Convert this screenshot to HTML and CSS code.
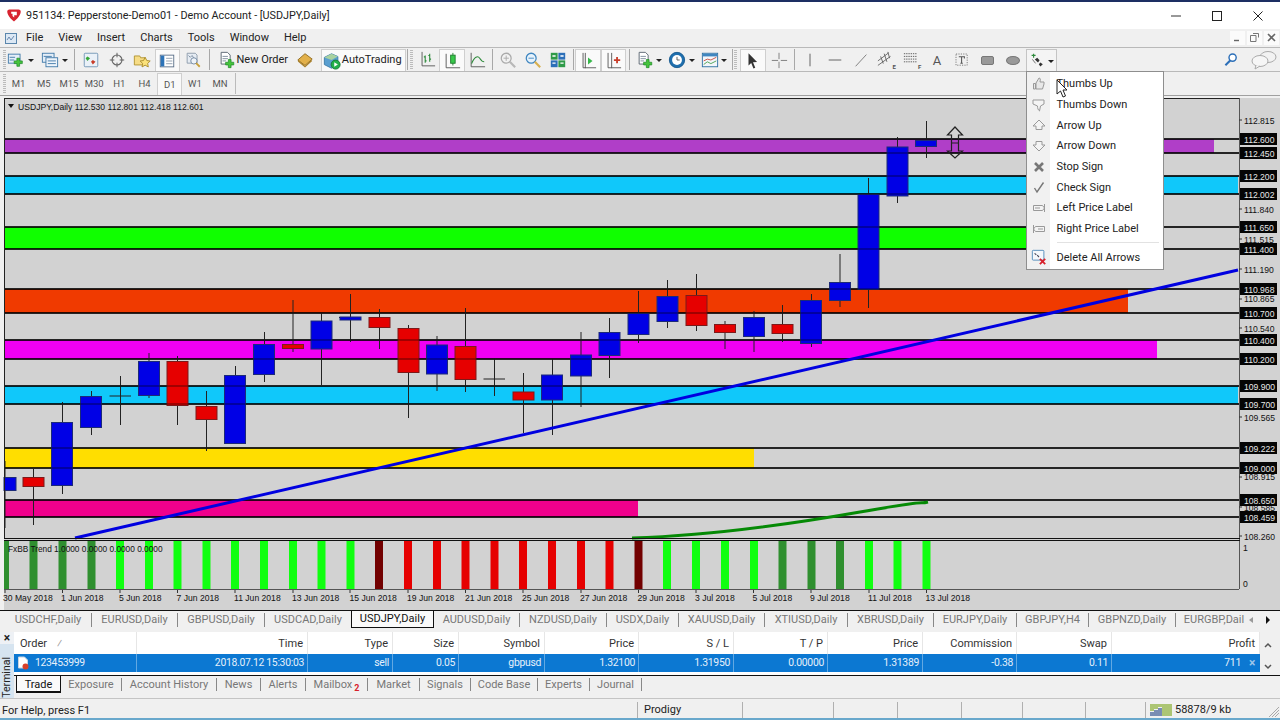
FILE: index.html
```html
<!DOCTYPE html>
<html lang="en">
<head>
  <meta charset="UTF-8">
  <title>951134: Pepperstone-Demo01 - Demo Account - [USDJPY,Daily]</title>
  <link rel="stylesheet" href="styles.css">
</head>
<body>
  <!-- shared toolbar icons -->
  <svg class="icon-defs" width="0" height="0">
    <symbol id="i-newchart" viewBox="0 0 20 20"><rect x="1.500" y="3.500" width="13" height="10" fill="#e4eef8" stroke="#3f78a8"/><path d="M3 7h6M3 10h5" stroke="#3f78a8"/><path d="M11 8h3v3h3v3h-3v3h-3v-3H8v-3h3z" fill="#46c43c" stroke="#1f8a2a" stroke-width=".8"/></symbol>
    <symbol id="i-profile" viewBox="0 0 20 20"><rect x="1.500" y="2.500" width="13" height="10" fill="#e4eef8" stroke="#3f78a8"/><rect x="5.500" y="7.500" width="13" height="10" fill="#eef4fa" stroke="#3f78a8"/><path d="M3 6h9M7.500 11h9M7.500 14h9" stroke="#3f78a8"/></symbol>
    <symbol id="i-market" viewBox="0 0 20 20"><rect x="2.500" y="2.500" width="15" height="15" rx="1" fill="#eaf1f8" stroke="#6f94b4"/><path d="M6 6l3 2-3 3-2-3z" fill="#37a83a"/><path d="M12 10l3 2-3 3-2-3z" fill="#c83c28"/></symbol>
    <symbol id="i-target" viewBox="0 0 20 20"><circle cx="10" cy="10" r="5.500" fill="none" stroke="#666" stroke-width="1.200"/><path d="M10 2v5M10 13v5M2 10h5M13 10h5" stroke="#555"/></symbol>
    <symbol id="i-star" viewBox="0 0 20 20"><path d="M1.500 5.500h6l1 2h5v8h-12z" fill="#f6dc86" stroke="#b0922e"/><path d="M13.500 7l1.800 3.600 3.800.5-2.800 2.700.7 3.900-3.500-1.900-3.500 1.900.7-3.900-2.800-2.700 3.800-.5z" fill="#fbe27a" stroke="#a88a2a"/></symbol>
    <symbol id="i-terminal" viewBox="0 0 20 20"><rect x="2.500" y="3.500" width="15" height="13" fill="#fff" stroke="#5a6f88"/><rect x="3" y="4" width="4" height="12" fill="#2c73b8"/><path d="M9 7h7M9 10h7M9 13h7" stroke="#8a9aaa"/></symbol>
    <symbol id="i-tester" viewBox="0 0 20 20"><path d="M3.500 2.500h9l2 2v9h-11z" fill="#e6ecf3" stroke="#8a98a8"/><path d="M5 5l2 2 2-2 2 3" fill="none" stroke="#7a8ca0"/><circle cx="11" cy="11" r="3.500" fill="#eef3f8" stroke="#6f86a0"/><path d="M13.500 13.500l4 4" stroke="#c8a03a" stroke-width="2"/></symbol>
    <symbol id="i-order" viewBox="0 0 20 20"><path d="M3.500 1.500h7l3 3v10h-10z" fill="#fff" stroke="#55606c"/><path d="M5 6h6M5 8.500h6M5 11h4" stroke="#7a8a9a"/><path d="M11.500 9.500h3v3h3v3h-3v3h-3v-3h-3v-3h3z" fill="#46c43c" stroke="#1f8a2a" stroke-width=".8"/></symbol>
    <symbol id="i-book" viewBox="0 0 20 20"><path d="M10 3l8 6-8 7-8-6z" fill="#e2b04a" stroke="#8e6a1e"/><path d="M2.500 11l7.500 6.500 7.500-7" fill="none" stroke="#a97f28" stroke-width="1.400"/></symbol>
    <symbol id="i-auto" viewBox="0 0 20 20"><path d="M1.500 6l8-4 7 3v9l-7 4-8-4z" fill="#5a9fd0" stroke="#3a7aa8"/><path d="M1.500 6l8 3 7-4-7-3z" fill="#a8d2a0"/><circle cx="14" cy="14" r="5" fill="#22b04a" stroke="#147a30"/><path d="M12.500 11.500l4 2.500-4 2.500z" fill="#fff"/></symbol>
    <symbol id="i-bars" viewBox="0 0 20 20"><path d="M4.500 1v15.500H19" fill="none" stroke="#555"/><path d="M8 5v8M6.500 6.500H8M8 11h1.500M13 3v9M11.500 5H13M13 9h1.500" fill="none" stroke="#2c8a3a" stroke-width="1.200"/></symbol>
    <symbol id="i-candle" viewBox="0 0 20 20"><path d="M3.500 2v15.500H19" fill="none" stroke="#555"/><path d="M11 1v14" stroke="#1f7a2c"/><rect x="8.500" y="3.500" width="5" height="9" fill="#37c84a" stroke="#1f7a2c"/></symbol>
    <symbol id="i-line" viewBox="0 0 20 20"><path d="M3.500 2v15.500H19" fill="none" stroke="#555"/><path d="M4 14c3-8 7-9 9-6s3 4 5 4" fill="none" stroke="#2c8a3a" stroke-width="1.200"/></symbol>
    <symbol id="i-zoomin" viewBox="0 0 20 20"><circle cx="8" cy="8" r="5.500" fill="#f2f2f2" stroke="#aaa" stroke-width="1.400"/><path d="M5 8h6M8 5v6" stroke="#aaa"/><path d="M12 12l6 6" stroke="#b8b8b8" stroke-width="2.400"/></symbol>
    <symbol id="i-zoomout" viewBox="0 0 20 20"><circle cx="8" cy="8" r="5.500" fill="#e6f2fb" stroke="#3f86c0" stroke-width="1.400"/><path d="M5 8h6" stroke="#3f86c0"/><path d="M12 12l6 6" stroke="#d8b050" stroke-width="2.400"/></symbol>
    <symbol id="i-tile" viewBox="0 0 20 20"><rect x="1" y="1" width="8.500" height="8.500" fill="#2e9a48"/><rect x="10.500" y="1" width="8.500" height="8.500" fill="#2c6fb8"/><rect x="1" y="10.500" width="8.500" height="8.500" fill="#2c6fb8"/><rect x="10.500" y="10.500" width="8.500" height="8.500" fill="#2e9a48"/><path d="M3 5h4M13 5h4M3 14h4M13 14h4" stroke="#fff" stroke-width="1.600"/></symbol>
    <symbol id="i-scroll" viewBox="0 0 20 20"><path d="M4.500 1v16.500H19M7 1v17" fill="none" stroke="#555"/><path d="M10 6l5 4-5 4z" fill="#37b84a"/></symbol>
    <symbol id="i-shift" viewBox="0 0 20 20"><path d="M4.500 1v16.500H19M8.500 1v17" fill="none" stroke="#555"/><path d="M11 8h2.500V5.500h2V8H18v2h-2.500v2.500h-2V10H11z" fill="#c83c28"/></symbol>
    <symbol id="i-clock" viewBox="0 0 20 20"><circle cx="10" cy="10" r="8.500" fill="#1f6fae" stroke="#175a90"/><circle cx="10" cy="10" r="5.500" fill="#fff"/><path d="M10 6.500V10h3" fill="none" stroke="#555"/></symbol>
    <symbol id="i-template" viewBox="0 0 20 20"><rect x="1.500" y="2.500" width="17" height="15" fill="#f2f6fa" stroke="#2c6fa0"/><rect x="2" y="3" width="16" height="3" fill="#3f86c0"/><path d="M3 11l4-2 4 1 6-3" fill="none" stroke="#c84a3a"/><path d="M3 15l4-3 4 2 6-3" fill="none" stroke="#4aa050"/></symbol>
    <symbol id="i-cursor" viewBox="0 0 20 20"><path d="M5 1.500l9.500 9.500-4.500.5 2.500 6-2 .8-2.500-6L5 15z" fill="#333"/></symbol>
    <symbol id="i-cross" viewBox="0 0 20 20"><path d="M10 2v7M10 12v7M2 10.500h7M12 10.500h7" stroke="#777"/></symbol>
    <symbol id="i-vline" viewBox="0 0 20 20"><path d="M10 3v14" stroke="#555"/></symbol>
    <symbol id="i-hline" viewBox="0 0 20 20"><path d="M3 10h14" stroke="#555"/></symbol>
    <symbol id="i-trend" viewBox="0 0 20 20"><path d="M4 17L16 4" stroke="#777"/></symbol>
    <symbol id="i-channel" viewBox="0 0 20 20"><path d="M1 11L13 2M1 16L15 6M4 6l3 8M8 3l3 9M12 1l2 7" fill="none" stroke="#555" stroke-width=".9"/></symbol>
    <symbol id="i-fibo" viewBox="0 0 20 20"><path d="M1 3h14M1 6h14M1 9h14M1 12h14" stroke="#555" stroke-dasharray="1.500 1"/></symbol>
    <symbol id="i-label" viewBox="0 0 20 20"><rect x="2.500" y="2.500" width="14" height="14" fill="none" stroke="#666" stroke-dasharray="1.500 1.500"/><path d="M6 6h7v2M9.500 6v8M8 14h3" fill="none" stroke="#555" stroke-width="1.300"/></symbol>
    <symbol id="i-arrows" viewBox="0 0 20 20"><path d="M2 3h5M4.500 1v5" stroke="#2c8a3a" stroke-width="1.400"/><path d="M6 8l3-2 3 3-2 3z" fill="#333"/><path d="M13 12l3 2-3 3-2-3z" fill="#333"/><path d="M3 8l4 5" stroke="#555"/></symbol>
    <symbol id="i-search" viewBox="0 0 20 20"><circle cx="12" cy="7" r="4.500" fill="#fff" stroke="#2c6fb8" stroke-width="1.800"/><path d="M9 10.500l-6 6" stroke="#2c6fb8" stroke-width="2.600"/></symbol>
    <symbol id="i-chat" viewBox="0 0 28 20"><ellipse cx="18" cy="7" rx="8" ry="5.500" fill="#f2f2f2" stroke="#aaa"/><ellipse cx="10" cy="11" rx="8" ry="5.500" fill="#f6f6f6" stroke="#aaa"/><path d="M6 15l-1 4 5-3" fill="#f6f6f6" stroke="#aaa"/></symbol>
  </svg>

  <header class="titlebar">
    <svg class="app-logo" width="14" height="13" viewBox="0 0 14 13"><path d="M2.500 .5h9C13 .5 14 1.500 13.700 3.200 13.200 6.500 10 10 7 12.500 4 10 .8 6.500.3 3.200 0 1.500 1 .5 2.500.5z" fill="#d8232f"/><path d="M4.200 2.800h5.600v3.400H7.200v2.300L5.500 7V4.700H4.200z" fill="#fff"/></svg>
    <span class="window-title">951134: Pepperstone-Demo01 - Demo Account - [USDJPY,Daily]</span>
    <div class="window-buttons">
      <svg width="12" height="12" viewBox="0 0 12 12"><path d="M1 6h10" stroke="#333"/></svg>
      <svg width="12" height="12" viewBox="0 0 12 12"><rect x="1.500" y="1.500" width="9" height="9" fill="none" stroke="#222"/></svg>
      <svg width="12" height="12" viewBox="0 0 12 12"><path d="M1.500 1.500l9 9M10.500 1.500l-9 9" stroke="#222"/></svg>
    </div>
  </header>

  <nav class="menubar">
    <svg class="doc-icon" width="14" height="14" viewBox="0 0 14 14"><rect x="1.500" y="2.500" width="11" height="10" fill="#dce8f4" stroke="#5a86ac"/><path d="M3 9l2-3 2 3 3-4" fill="none" stroke="#6a8ab0"/></svg>
    <div class="menu-items">
      <span>File</span><span>View</span><span>Insert</span><span>Charts</span><span>Tools</span><span>Window</span><span>Help</span>
    </div>
    <div class="mdi-buttons">
      <span class="mdi-btn"><svg width="9" height="9" viewBox="0 0 9 9"><path d="M1 7.500h5" stroke="#666" stroke-width="1.400"/></svg></span>
      <span class="mdi-btn"><svg width="9" height="9" viewBox="0 0 9 9"><path d="M3 .5h5.500v4M.5 2.500h5.500v6H.5z" fill="none" stroke="#777"/></svg></span>
      <span class="mdi-btn"><svg width="9" height="9" viewBox="0 0 9 9"><path d="M1 1l7 7M8 1L1 8" stroke="#666" stroke-width="1.600"/></svg></span>
    </div>
  </nav>

  <div class="toolbar">
    <i class="grip"></i>
    <span class="tool tool-drop first-drop"><svg width="18" height="18"><use href="#i-newchart"/></svg><b class="caret"></b></span>
    <span class="tool tool-drop"><svg width="18" height="18"><use href="#i-profile"/></svg><b class="caret"></b></span>
    <i class="sep"></i>
    <span class="tool"><svg width="18" height="18"><use href="#i-market"/></svg></span>
    <span class="tool"><svg width="18" height="18"><use href="#i-target"/></svg></span>
    <span class="tool"><svg width="18" height="18"><use href="#i-star"/></svg></span>
    <span class="tool pressed"><svg width="18" height="18"><use href="#i-terminal"/></svg></span>
    <span class="tool"><svg width="18" height="18"><use href="#i-tester"/></svg></span>
    <i class="sep"></i>
    <span class="tool tool-text new-order"><svg width="18" height="18"><use href="#i-order"/></svg>New Order</span>
    <span class="tool"><svg width="18" height="18"><use href="#i-book"/></svg></span>
    <span class="tool tool-text auto-trading pressed"><svg width="18" height="18"><use href="#i-auto"/></svg>AutoTrading</span>
    <i class="sep sep-tight"></i><i class="grip grip-near"></i>
    <span class="tool"><svg width="18" height="18"><use href="#i-bars"/></svg></span>
    <span class="tool pressed"><svg width="18" height="18"><use href="#i-candle"/></svg></span>
    <span class="tool"><svg width="18" height="18"><use href="#i-line"/></svg></span>
    <i class="sep sep-five"></i>
    <span class="tool"><svg width="18" height="18"><use href="#i-zoomin"/></svg></span>
    <span class="tool"><svg width="18" height="18"><use href="#i-zoomout"/></svg></span>
    <span class="tool"><svg width="16" height="16"><use href="#i-tile"/></svg></span>
    <i class="sep sep-tight"></i>
    <span class="tool pressed"><svg width="18" height="18"><use href="#i-scroll"/></svg></span>
    <span class="tool pressed"><svg width="18" height="18"><use href="#i-shift"/></svg></span>
    <i class="sep sep-wide"></i>
    <span class="tool tool-drop"><svg width="18" height="18"><use href="#i-order"/></svg><b class="caret"></b></span>
    <span class="tool tool-drop"><svg width="18" height="18"><use href="#i-clock"/></svg><b class="caret"></b></span>
    <span class="tool tool-drop"><svg width="18" height="18"><use href="#i-template"/></svg><b class="caret"></b></span>
    <i class="sep sep-tight"></i><i class="grip grip-gap"></i>
    <span class="tool pressed"><svg width="18" height="18"><use href="#i-cursor"/></svg></span>
    <span class="tool"><svg width="18" height="18"><use href="#i-cross"/></svg></span>
    <i class="sep sep-lines"></i>
    <span class="tool"><svg width="18" height="18"><use href="#i-vline"/></svg></span>
    <span class="tool"><svg width="18" height="18"><use href="#i-hline"/></svg></span>
    <span class="tool"><svg width="18" height="18"><use href="#i-trend"/></svg></span>
    <span class="tool letter-e"><svg width="18" height="18"><use href="#i-channel"/></svg></span>
    <span class="tool letter-f"><svg width="18" height="18"><use href="#i-fibo"/></svg></span>
    <span class="tool tool-letter">A</span>
    <span class="tool"><svg width="16" height="16"><use href="#i-label"/></svg></span>
    <span class="tool"><i class="shape-rect"></i></span>
    <span class="tool"><i class="shape-ellipse"></i></span>
    <span class="tool tool-drop arrows-tool open"><svg width="16" height="16"><use href="#i-arrows"/></svg><b class="caret"></b></span>
    <div class="toolbar-right">
      <svg width="16" height="16"><use href="#i-search"/></svg>
      <svg width="28" height="20"><use href="#i-chat"/></svg>
    </div>
  </div>

  <div class="periodbar">
    <i class="grip"></i>
    <span>M1</span><span>M5</span><span>M15</span><span>M30</span><span>H1</span><span>H4</span><span class="active">D1</span><span>W1</span><span>MN</span>
    <i class="period-end"></i>
  </div>

  <main class="chart-wrap">
    <!-- viewBox keeps the page's y values, chart data is easier to read that way -->
    <svg class="chart" width="1280" height="514" viewBox="0 96 1280 514">
      <rect class="frame-bg" x="4" y="98" width="1276" height="512"/>

      <rect x="4" y="139" width="1210" height="14" fill="#b03ec8"/>
      <rect x="4" y="176" width="1234" height="18" fill="#10c8fa"/>
      <rect x="4" y="227" width="1040" height="22" fill="#10ff00"/>
      <rect x="4" y="289" width="1124" height="24" fill="#f03a00"/>
      <rect x="4" y="340" width="1153" height="19" fill="#f000f4"/>
      <rect x="4" y="386" width="1234" height="18" fill="#10c8fa"/>
      <rect x="4" y="448" width="750" height="20" fill="#ffde00"/>
      <rect x="4" y="500" width="634" height="17" fill="#f0008c"/>

      <g id="levels" class="levels">
        <path d="M4 139H1240M4 153H1240M4 176H1240M4 194H1240M4 227H1240M4 249H1240M4 289H1240M4 313H1240M4 340H1240M4 359H1240M4 386H1240M4 404H1240M4 448H1240M4 468H1240M4 500H1240M4 517H1240"/>
      </g>

      <g class="wick">
        <path d="M5 461V528M33.500 469V525M62.500 402V494M91.500 391V435M120.500 376V425M149 353V398M177.500 356V425M206.500 391V451M235.500 366V443M264.500 332V382M293 300V352M321.500 313V385M350.500 294V342M379.500 309V349M408.500 325V418M437 336V391M465.500 308V392M494.500 358V396M523.500 373V433M552.500 359V435M581 332V407M609.500 318V378M638.500 291V343M667.500 280V328M696.500 274V331M725 321V349M754 311V352M782.500 305V342M811.500 294V347M840 254V307M868.500 178V308M897.500 137V203M926.500 121V158"/>
        <path d="M109.500 396H131M339 317.500H361M483.500 379H505"/>
      </g>
      <g class="bull">
        <rect x="4" y="477.500" width="12" height="13"/>
        <rect x="51.500" y="422.500" width="21" height="63"/>
        <rect x="80.500" y="396.500" width="21" height="31"/>
        <rect x="138.500" y="361.500" width="21" height="34"/>
        <rect x="224.500" y="375.500" width="21" height="68"/>
        <rect x="253.500" y="344.500" width="21" height="30"/>
        <rect x="311" y="321" width="21" height="28"/>
        <rect x="340" y="317" width="21" height="3"/>
        <rect x="426.500" y="345" width="21" height="29"/>
        <rect x="541.500" y="375" width="21" height="25"/>
        <rect x="570.500" y="355" width="21" height="21"/>
        <rect x="599" y="332.500" width="21" height="23"/>
        <rect x="628" y="313.500" width="21" height="21"/>
        <rect x="657" y="296.500" width="21" height="25"/>
        <rect x="743.500" y="317.500" width="21" height="19"/>
        <rect x="800.500" y="300.500" width="21" height="43"/>
        <rect x="829.500" y="282.500" width="21" height="18"/>
        <rect x="858" y="194.500" width="21" height="95"/>
        <rect x="887" y="147" width="21" height="49"/>
        <rect x="915.500" y="140.500" width="21" height="6"/>
      </g>
      <g class="bear">
        <rect x="23" y="477.500" width="21" height="9"/>
        <rect x="167" y="361.500" width="21" height="44"/>
        <rect x="196" y="406.500" width="21" height="13"/>
        <rect x="282.500" y="344.500" width="21" height="4"/>
        <rect x="369" y="317.500" width="21" height="10"/>
        <rect x="398" y="328.500" width="21" height="44"/>
        <rect x="455" y="346.500" width="21" height="33"/>
        <rect x="513" y="392" width="21" height="8"/>
        <rect x="686" y="295.500" width="21" height="30"/>
        <rect x="714.500" y="324.500" width="21" height="8"/>
        <rect x="772" y="324.500" width="21" height="9"/>
      </g>
      <use href="#levels" class="levels-over"/>

      <path class="updown" d="M955 127L962.500 135H958.500V151H962.500L955 158L947.500 151H951.500V135H947.500ZM951.500 143H958.500"/>

      <path class="trend-blue" d="M75 538L1238 270"/>
      <path class="trend-green" d="M632 538C700 536 780 526 860 512S915 505 928 502"/>

      <text class="legend" x="18" y="109.500">USDJPY,Daily 112.530 112.801 112.418 112.601</text>
      <path d="M8 104h6l-3 4z" fill="#111"/>

      <!-- window frames -->
      <path class="frame" d="M4.500 98V539M4 98.500H1240"/>
      <path class="axis" d="M1239.500 98V589M4.500 540V589M4 589.500H1239"/>
      <path class="window-sep" d="M4 538.500H1240M4 540.500H1240"/>

      <!-- price axis -->
      <g class="ticks">
        <path d="M1239 120h3M1239 209h3M1239 239h3M1239 269h3M1239 299h3M1239 328h3M1239 417h3M1239 477h3M1239 507h3M1239 536h3"/>
        <path d="M5 590v3M62.500 590v3M120 590v3M177.500 590v3M235 590v3M293 590v3M350 590v3M408 590v3M465.500 590v3M523 590v3M581 590v3M638.500 590v3M696 590v3M753.500 590v3M811 590v3M869 590v3M926.500 590v3"/>
      </g>
      <g class="price">
        <text x="1244" y="123.500">112.815</text>
        <text x="1244" y="212.500">111.840</text>
        <text x="1244" y="242.500">111.515</text>
        <text x="1244" y="272.500">111.190</text>
        <text x="1244" y="302">110.865</text>
        <text x="1244" y="331.500">110.540</text>
        <text x="1244" y="420.500">109.565</text>
        <text x="1244" y="480">108.915</text>
        <text x="1244" y="511">108.585</text>
        <text x="1244" y="539.500">108.260</text>
        <text x="1243" y="550.500">1</text>
        <text x="1243" y="587">0</text>
      </g>
      <g class="price-tags">
        <rect x="1240" y="133" width="37" height="12"/>
        <rect x="1240" y="147" width="37" height="12"/>
        <rect x="1240" y="170" width="37" height="12"/>
        <rect x="1240" y="188" width="37" height="12"/>
        <rect x="1240" y="221" width="37" height="12"/>
        <rect x="1240" y="243" width="37" height="12"/>
        <rect x="1240" y="283" width="37" height="12"/>
        <rect x="1240" y="307" width="37" height="12"/>
        <rect x="1240" y="334" width="37" height="12"/>
        <rect x="1240" y="353" width="37" height="12"/>
        <rect x="1240" y="380" width="37" height="12"/>
        <rect x="1240" y="398" width="37" height="12"/>
        <rect x="1240" y="442" width="37" height="12"/>
        <rect x="1240" y="462" width="37" height="12"/>
        <rect x="1240" y="494" width="37" height="12"/>
        <rect x="1240" y="511" width="37" height="12"/>
      </g>
      <g class="price-tag-text">
        <text x="1244" y="142.500">112.600</text>
        <text x="1244" y="156.500">112.450</text>
        <text x="1244" y="179.500">112.200</text>
        <text x="1244" y="197.500">112.002</text>
        <text x="1244" y="230.500">111.650</text>
        <text x="1244" y="252.500">111.400</text>
        <text x="1244" y="292.500">110.968</text>
        <text x="1244" y="316.500">110.700</text>
        <text x="1244" y="343.500">110.400</text>
        <text x="1244" y="362.500">110.200</text>
        <text x="1244" y="389.500">109.900</text>
        <text x="1244" y="407.500">109.700</text>
        <text x="1244" y="451.500">109.222</text>
        <text x="1244" y="471.500">109.000</text>
        <text x="1244" y="503.500">108.650</text>
        <text x="1244" y="520.500">108.459</text>
      </g>

      <!-- FxBB Trend indicator -->
      <g class="ind-dark">
        <rect x="4" y="541" width="5" height="48"/>
        <rect x="29.500" y="541" width="8" height="48"/><rect x="58.500" y="541" width="8" height="48"/><rect x="87.500" y="541" width="8" height="48"/>
        <rect x="778.500" y="541" width="8" height="48"/><rect x="807.500" y="541" width="8" height="48"/><rect x="836" y="541" width="8" height="48"/>
      </g>
      <g class="ind-green">
        <rect x="116" y="541" width="8" height="48"/><rect x="145" y="541" width="8" height="48"/><rect x="173.500" y="541" width="8" height="48"/><rect x="202.500" y="541" width="8" height="48"/><rect x="231" y="541" width="8" height="48"/><rect x="260" y="541" width="8" height="48"/><rect x="289" y="541" width="8" height="48"/><rect x="317.500" y="541" width="8" height="48"/><rect x="346.500" y="541" width="8" height="48"/>
        <rect x="663" y="541" width="8" height="48"/><rect x="692" y="541" width="8" height="48"/><rect x="721" y="541" width="8" height="48"/><rect x="750" y="541" width="8" height="48"/>
        <rect x="865" y="541" width="8" height="48"/><rect x="893.500" y="541" width="8" height="48"/><rect x="922.500" y="541" width="8" height="48"/>
      </g>
      <g class="ind-red">
        <rect x="404" y="541" width="8" height="48"/><rect x="433" y="541" width="8" height="48"/><rect x="461.500" y="541" width="8" height="48"/><rect x="490.500" y="541" width="8" height="48"/><rect x="519" y="541" width="8" height="48"/><rect x="548" y="541" width="8" height="48"/><rect x="577" y="541" width="8" height="48"/><rect x="605.500" y="541" width="8" height="48"/>
      </g>
      <g class="ind-maroon">
        <rect x="375" y="541" width="8" height="48"/><rect x="634.500" y="541" width="8" height="48"/>
      </g>
      <text class="legend legend-ind" x="8" y="551.500">FxBB Trend 1.0000 0.0000 0.0000 0.0000</text>

      <!-- time axis -->
      <g class="dates">
        <text x="3" y="601">30 May 2018</text>
        <text x="61" y="601">1 Jun 2018</text>
        <text x="119" y="601">5 Jun 2018</text>
        <text x="176.500" y="601">7 Jun 2018</text>
        <text x="234" y="601">11 Jun 2018</text>
        <text x="292" y="601">13 Jun 2018</text>
        <text x="349.500" y="601">15 Jun 2018</text>
        <text x="407" y="601">19 Jun 2018</text>
        <text x="465" y="601">21 Jun 2018</text>
        <text x="522" y="601">25 Jun 2018</text>
        <text x="580" y="601">27 Jun 2018</text>
        <text x="637.500" y="601">29 Jun 2018</text>
        <text x="695" y="601">3 Jul 2018</text>
        <text x="752.500" y="601">5 Jul 2018</text>
        <text x="810" y="601">9 Jul 2018</text>
        <text x="868" y="601">11 Jul 2018</text>
        <text x="925.500" y="601">13 Jul 2018</text>
      </g>
    </svg>
  </main>

  <div class="chart-tabs">
    <span class="tab">USDCHF,Daily</span>
    <span class="tab">EURUSD,Daily</span>
    <span class="tab">GBPUSD,Daily</span>
    <span class="tab no-sep">USDCAD,Daily</span>
    <span class="tab active">USDJPY,Daily</span>
    <span class="tab">AUDUSD,Daily</span>
    <span class="tab">NZDUSD,Daily</span>
    <span class="tab">USDX,Daily</span>
    <span class="tab">XAUUSD,Daily</span>
    <span class="tab">XTIUSD,Daily</span>
    <span class="tab">XBRUSD,Daily</span>
    <span class="tab">EURJPY,Daily</span>
    <span class="tab">GBPJPY,H4</span>
    <span class="tab">GBPNZD,Daily</span>
    <span class="tab no-sep tab-cut">EURGBP,Dail</span>
    <span class="tab-arrows"><b class="arrow-left"></b><b class="arrow-right"></b></span>
  </div>

  <section class="terminal">
    <aside class="terminal-strip">
      <span class="strip-close">×</span>
      <span class="strip-title">Terminal</span>
    </aside>
    <div class="terminal-body">
      <div class="orders-wrap">
        <div class="orders">
          <div class="cell head first">Order <em>⁄</em></div>
          <div class="cell head">Time</div>
          <div class="cell head">Type</div>
          <div class="cell head">Size</div>
          <div class="cell head">Symbol</div>
          <div class="cell head">Price</div>
          <div class="cell head">S / L</div>
          <div class="cell head">T / P</div>
          <div class="cell head">Price</div>
          <div class="cell head">Commission</div>
          <div class="cell head">Swap</div>
          <div class="cell head">Profit</div>

          <div class="cell row first">
            <svg width="14" height="14" viewBox="0 0 14 14"><path d="M2.500 1h6l3 3v8h-9z" fill="#fff" stroke="#c8d4e0"/><circle cx="9.500" cy="10.500" r="3" fill="#d8402a"/></svg>
            123453999
          </div>
          <div class="cell row">2018.07.12 15:30:03</div>
          <div class="cell row">sell</div>
          <div class="cell row">0.05</div>
          <div class="cell row">gbpusd</div>
          <div class="cell row">1.32100</div>
          <div class="cell row">1.31950</div>
          <div class="cell row">0.00000</div>
          <div class="cell row">1.31389</div>
          <div class="cell row">-0.38</div>
          <div class="cell row">0.11</div>
          <div class="cell row profit">711<span class="row-close">×</span></div>
        </div>
        <div class="scroller">
          <svg width="10" height="8" viewBox="0 0 10 8"><path d="M2 6l3-3 3 3" fill="none" stroke="#555" stroke-width="1.500"/></svg>
          <svg width="10" height="8" viewBox="0 0 10 8"><path d="M2 2l3 3 3-3" fill="none" stroke="#555" stroke-width="1.500"/></svg>
        </div>
      </div>
      <div class="terminal-tabs">
        <span class="ttab active">Trade</span>
        <span class="ttab">Exposure</span>
        <span class="ttab">Account History</span>
        <span class="ttab">News</span>
        <span class="ttab">Alerts</span>
        <span class="ttab">Mailbox<sub>2</sub></span>
        <span class="ttab">Market</span>
        <span class="ttab">Signals</span>
        <span class="ttab">Code Base</span>
        <span class="ttab">Experts</span>
        <span class="ttab">Journal</span>
      </div>
    </div>
  </section>

  <footer class="statusbar">
    <span>For Help, press F1</span>
    <span class="pane">Prodigy</span>
    <span class="pane"></span>
    <span class="pane"></span>
    <span class="pane"></span>
    <span class="pane"></span>
    <span class="pane"></span>
    <span class="pane"></span>
    <span class="pane conn">
      <svg width="22" height="12" viewBox="0 0 22 12"><path d="M1 12V8M3 12V8M5 12V6M7 12V6M9 12V4M11 12V4" stroke="#2a4a8a" stroke-width="1.200"/><path d="M1 7V0M3 7V0M5 5V0M7 5V0M9 3V0M11 3V0M13 12V0M15 12V0M17 12V0M19 12V0M21 12V0" stroke="#7fa820" stroke-width="1.200"/></svg>
      58878/9 kb
    </span>
    <svg class="size-grip" width="12" height="12" viewBox="0 0 12 12"><path d="M11 1L1 11M11 4L4 11M11 7l-4 4" stroke="#a8a8a8"/></svg>
  </footer>

  <!-- arrows dropdown, open over the chart -->
  <div class="dropdown">
    <div class="drop-item"><svg width="16" height="16" viewBox="0 0 16 16"><path d="M5 7l3-5c1.500 0 1.500 1.500 1 4h4v2l-1.500 5H5zM2.500 7.500h2V13h-2z" fill="#e8e8e8" stroke="#999"/></svg><span>Thumbs Up</span></div>
    <div class="drop-item"><svg width="16" height="16" viewBox="0 0 16 16"><path d="M2 3h11v4L9.500 9 8.500 14C7 13 6.500 11 6.500 9L2 7z" fill="#f4f4f4" stroke="#999"/></svg><span>Thumbs Down</span></div>
    <div class="drop-item"><svg width="16" height="16" viewBox="0 0 16 16"><path d="M8 3l6 6h-3v3.500H5V9H2z" fill="#f4f4f4" stroke="#999"/></svg><span>Arrow Up</span></div>
    <div class="drop-item"><svg width="16" height="16" viewBox="0 0 16 16"><path d="M8 13l6-6h-3V3.500H5V7H2z" fill="#f4f4f4" stroke="#999"/></svg><span>Arrow Down</span></div>
    <div class="drop-item"><svg width="16" height="16" viewBox="0 0 16 16"><path d="M4 4l8 8M12 4l-8 8" stroke="#777" stroke-width="2.600"/></svg><span>Stop Sign</span></div>
    <div class="drop-item"><svg width="16" height="16" viewBox="0 0 16 16"><path d="M3.500 9l2.500 4 6.500-9.500" fill="none" stroke="#777" stroke-width="1.400"/></svg><span>Check Sign</span></div>
    <div class="drop-item"><svg width="16" height="16" viewBox="0 0 16 16"><path d="M2.500 5.500h9l2 2.500-2 2.500h-9z" fill="#f4f4f4" stroke="#999"/><path d="M13.500 4v8M4 8h5" stroke="#999"/></svg><span>Left Price Label</span></div>
    <div class="drop-item"><svg width="16" height="16" viewBox="0 0 16 16"><path d="M13.500 5.500h-9l-2 2.500 2 2.500h9z" fill="#f4f4f4" stroke="#999"/><path d="M2.500 4v8M7 8h5" stroke="#999"/></svg><span>Right Price Label</span></div>
    <hr class="drop-sep">
    <div class="drop-item"><svg width="18" height="18" viewBox="0 0 18 18"><rect x="1.500" y="1.500" width="13" height="11" rx="1" fill="#f4f8fc" stroke="#4a86b8"/><path d="M4 5l2 1.500M7 7l2 2" stroke="#445" stroke-width="1.200"/><path d="M10 11l6 6M16 11l-6 6" stroke="#d8202a" stroke-width="2"/></svg><span>Delete All Arrows</span></div>
  </div>

  <svg class="mouse-cursor" width="14" height="19" viewBox="0 0 14 19"><path d="M1 1v14l3.500-3 2.500 6 2.500-1-2.500-6H11z" fill="#fff" stroke="#222"/></svg>
</body>
</html>
```

FILE: styles.css
```css
* {
  box-sizing: border-box;
}

html, body {
  margin: 0;
  height: 100%;
}

body {
  position: relative;
  width: 1280px;
  height: 720px;
  overflow: hidden;
  display: flex;
  flex-direction: column;
  background: #f0f0f0;
  color: #222;
  font-family: Roboto, "Open Sans", sans-serif;
  font-size: 11px;
}

svg {
  display: block;
  flex: none;
}

.icon-defs {
  position: absolute;
}

/* title bar */
.titlebar {
  height: 29px;
  flex: none;
  display: flex;
  align-items: center;
  padding-left: 7px;
  background: #fff;
  border-top: 2px solid #1d2f63;
}

.window-title {
  margin-left: 5px;
  font-size: 10.800px;
  color: #222;
}

.window-buttons {
  margin-left: auto;
  display: grid;
  grid-template-columns: repeat(3, 41px);
  justify-items: center;
  padding-right: 2px;
}

/* menu */
.menubar {
  height: 18px;
  flex: none;
  display: flex;
  align-items: center;
  padding: 0 0 1px 4px;
}

.menu-items {
  display: flex;
  gap: 15px;
  margin-left: 8px;
}

.mdi-buttons {
  margin-left: auto;
  display: flex;
  gap: 2px;
  padding-right: 1px;
}

.mdi-btn {
  width: 15px;
  height: 14px;
  display: flex;
  align-items: center;
  justify-content: center;
  background: #fbfbfb;
}

/* main toolbar */
.toolbar {
  height: 25px;
  flex: none;
  display: flex;
  align-items: stretch;
  padding-left: 3px;
  border-top: 1px solid #b9b9b9;
  border-bottom: 1px solid #b9b9b9;
}

.grip {
  width: 3px;
  margin: 2px 0;
  background: repeating-linear-gradient(#bbb 0 1px, #f0f0f0 1px 2px);
}

.grip-near {
  margin-right: 1px;
}

.grip-gap {
  margin-right: 3px;
}

.sep {
  width: 8px;
  margin: 1px 0;
  background: linear-gradient(#a8a8a8, #a8a8a8) center / 1px 100% no-repeat;
}

.sep-tight {
  width: 4px;
}

.sep-five {
  width: 5px;
}

.sep-wide {
  width: 7px;
}

.sep-lines {
  width: 6px;
}

.tool {
  width: 25.400px;
  flex: none;
  display: flex;
  align-items: center;
  justify-content: center;
  position: relative;
  margin-top: 1px;
}

.tool.pressed {
  background: #fafafa;
  border: 1px solid #cfcfcf;
  border-bottom: 0;
}

.tool-drop {
  width: 32.500px;
  justify-content: flex-start;
  padding-left: 3px;
  gap: 2.500px;
}

.first-drop {
  width: 32px;
  padding-left: 1px;
}

.caret {
  width: 0;
  height: 0;
  border-left: 3px solid transparent;
  border-right: 3px solid transparent;
  border-top: 3px solid #222;
}

.tool-text {
  justify-content: flex-start;
  padding-bottom: 2px;
  white-space: nowrap;
}

.tool-text svg {
  margin-top: 2px;
}

.new-order {
  width: 78px;
  padding-left: 4px;
  margin-left: 1px;
}

.auto-trading {
  width: 85px;
  margin-left: 3px;
  padding-left: 1px;
  gap: 1px;
}

.tool-letter {
  font-size: 13px;
  color: #555;
}

.letter-e::after,
.letter-f::after {
  position: absolute;
  right: 3px;
  bottom: 1px;
  font-size: 6px;
  font-weight: 700;
  color: #555;
}

.letter-e::after {
  content: "E";
}

.letter-f::after {
  content: "F";
}

.shape-rect {
  width: 13px;
  height: 9px;
  border-radius: 2px;
  background: #999;
  border: 1px solid #777;
}

.shape-ellipse {
  width: 14px;
  height: 9px;
  border-radius: 50%;
  background: #999;
  border: 1px solid #777;
}

.arrows-tool {
  width: 31px;
  margin-bottom: -1px;
  background: #f4f4f4;
  border: 1px solid #c4c4c4;
  border-bottom: 0;
}

.toolbar-right {
  margin-left: auto;
  display: flex;
  align-items: center;
  gap: 11px;
  padding-right: 2px;
}

/* timeframes */
.periodbar {
  height: 24px;
  flex: none;
  display: flex;
  align-items: stretch;
  padding-left: 3px;
  border-bottom: 1px solid #a0a0a0;
  font-size: 9.500px;
  color: #555;
}

.periodbar span {
  width: 25.200px;
  display: flex;
  align-items: center;
  justify-content: center;
}

.periodbar .active {
  margin: 1px 0 0;
  background: #f9f9f9;
  border: 1px solid #cfcfcf;
  border-bottom: 0;
}

.period-end {
  width: 1px;
  margin: 1px 0 1px 2px;
  background: #bbb;
}

/* chart */
.chart-wrap {
  height: 514px;
  flex: none;
  background: #f0f0f0;
}

.frame-bg {
  fill: #d2d2d2;
}

.levels path {
  fill: none;
  stroke: #000;
  stroke-width: 1.700;
}

.levels-over {
  opacity: 0.4;
}

.wick path {
  fill: none;
  stroke: #222;
  stroke-width: 1;
}

.bull rect {
  fill: #0000e6;
  stroke: #1c2a78;
}

.bear rect {
  fill: #e60000;
  stroke: #7c1a1a;
}

.updown {
  fill: none;
  stroke: #222;
  stroke-width: 1.200;
}

.trend-blue {
  stroke: #0000e0;
  stroke-width: 3;
}

.trend-green {
  fill: none;
  stroke: #058a05;
  stroke-width: 3;
}

.legend,
.price text,
.price-tag-text text,
.dates text {
  font-family: "Liberation Sans", Arial, sans-serif;
  font-size: 8.600px;
  fill: #111;
}

.legend-ind {
  font-size: 8.300px;
}

.frame {
  fill: none;
  stroke: #222;
}

.axis {
  fill: none;
  stroke: #555;
}

.window-sep {
  fill: none;
  stroke: #111;
}

.ticks path {
  fill: none;
  stroke: #333;
}

.price-tags rect {
  fill: #050505;
}

.price-tag-text text {
  fill: #e8e8e8;
}

.ind-dark rect {
  fill: #2f8f2f;
}

.ind-green rect {
  fill: #10ff10;
}

.ind-red rect {
  fill: #e60000;
}

.ind-maroon rect {
  fill: #720000;
}

/* tabs under the chart */
.chart-tabs {
  height: 22px;
  flex: none;
  display: grid;
  grid-template-columns: 87px 86px 87px 86px 83px 86px 87px 72px 86px 83px 86px 83px 72px 87px 72px 32px;
  padding-left: 5px;
  align-items: start;
  border-top: 1px solid #111;
  color: #777;
}

.tab {
  height: 14px;
  margin-top: 2px;
  line-height: 14px;
  text-align: center;
  border-right: 1px solid #888;
  white-space: nowrap;
}

.tab.no-sep {
  border-right: 0;
}

.tab.active {
  height: 17px;
  margin-top: 0;
  line-height: 16px;
  color: #111;
  background: #fafafa;
  border: 1px solid #111;
  border-top: 0;
}

.tab-cut {
  overflow: hidden;
  padding-left: 4px;
}

.tab-arrows {
  display: flex;
  align-items: center;
  justify-content: space-between;
  height: 14px;
  margin-top: 2px;
  padding: 0 10px 0 1px;
}

.arrow-left {
  border-top: 3px solid transparent;
  border-bottom: 3px solid transparent;
  border-right: 4px solid #999;
}

.arrow-right {
  border-top: 4px solid transparent;
  border-bottom: 4px solid transparent;
  border-left: 4px solid #111;
}

/* terminal */
.terminal {
  height: 66px;
  flex: none;
  display: flex;
}

.terminal-strip {
  width: 14px;
  flex: none;
  display: flex;
  flex-direction: column;
  align-items: center;
  background: linear-gradient(#eef1f5 0 12px, #d6e4f0 12px);
}

.strip-close {
  font-size: 12px;
  font-weight: 700;
  line-height: 12px;
  height: 24px;
}

.strip-title {
  writing-mode: vertical-rl;
  transform: rotate(180deg);
  font-size: 10.500px;
  color: #222;
  line-height: 14px;
  margin-top: 1px;
}

.terminal-body {
  flex: 1;
  min-width: 0;
}

.orders-wrap {
  height: 44px;
  display: flex;
  border-bottom: 1px solid #111;
}

.orders {
  width: 1246px;
  display: grid;
  grid-template-columns: 123px 171px 85px 66px 86px 94px 95px 94px 95px 94px 95px 148px;
  grid-template-rows: 22px 18px;
  background: #fff;
}

.cell {
  padding-right: 3px;
  text-align: right;
  white-space: nowrap;
  line-height: 18px;
}

.cell.head {
  color: #333;
  line-height: 23px;
  padding-right: 4px;
  border-right: 1px solid #e6e6e6;
}

.cell.head em {
  margin-left: 10px;
  font-style: normal;
  color: #999;
}

.cell.row {
  background: #0c78d2;
  color: #e6f0fa;
  border-right: 1px solid #62a8e2;
  font-size: 10.400px;
  letter-spacing: -0.3px;
}

.cell.first {
  display: flex;
  align-items: center;
  text-align: left;
  padding-left: 6px;
}

.cell.row.first {
  gap: 5px;
  padding-left: 2px;
}

.cell.profit {
  padding-right: 5px;
  border-right: 0;
  display: flex;
  justify-content: flex-end;
  gap: 8px;
}

.row-close {
  font-weight: 700;
  color: #9ec6ea;
  font-size: 12px;
}

.scroller {
  flex: 1;
  display: flex;
  flex-direction: column;
  align-items: center;
  justify-content: space-between;
  padding: 9px 0 4px;
  margin-right: 5px;
  background: #f0f0f0;
}

.terminal-tabs {
  height: 18px;
  display: grid;
  grid-template-columns: 45px 61px 95px 44px 45px 62px 52px 51px 67px 52px 52px;
  padding-left: 2px;
  color: #777;
}

.ttab {
  height: 13px;
  margin-top: 2px;
  line-height: 13px;
  text-align: center;
  border-right: 1px solid #888;
  white-space: nowrap;
}

.ttab.active {
  height: 17px;
  margin-top: 0;
  line-height: 17px;
  color: #111;
  background: #fafafa;
  border: 1px solid #111;
  border-top: 0;
  border-bottom-width: 2px;
}

.ttab sub {
  font-size: 9px;
  font-weight: 700;
  color: #d8202a;
  margin-left: 2px;
  vertical-align: -3px;
  line-height: 0;
}

/* status bar */
.statusbar {
  position: relative;
  flex: 1;
  display: grid;
  grid-template-columns: 635px 105px 91px 64px 64px 61px 63px 60px 135px;
  align-items: center;
  border-top: 1px solid #c4c4c4;
  border-bottom: 2px solid #69a8cc;
  padding: 3px 0 0 2px;
  color: #222;
}

.pane {
  height: 16px;
  line-height: 16px;
  padding-left: 6px;
  border-left: 1px solid #b0b0b0;
}

.conn {
  display: flex;
  align-items: center;
  gap: 3px;
  padding-left: 4px;
}

.size-grip {
  position: absolute;
  right: 0;
  bottom: 0;
}

/* dropdown and pointer lie over the chart */
.dropdown {
  position: absolute;
  left: 1026px;
  top: 71px;
  width: 138px;
  height: 199px;
  padding-top: 1.500px;
  background: linear-gradient(90deg, #f1f1f1 0 23px, #fff 23px);
  border: 1px solid #8e8e8e;
  color: #222;
}

.drop-item {
  height: 20.700px;
  display: flex;
  align-items: center;
}

.drop-item svg {
  width: 16px;
  margin-left: 4px;
}

.drop-item span {
  margin-left: 9.500px;
}

.drop-sep {
  height: 1px;
  margin: 3px 4px 4px 30px;
  border: 0;
  background: #e2e2e2;
}

.mouse-cursor {
  position: absolute;
  left: 1056px;
  top: 79px;
}
```
